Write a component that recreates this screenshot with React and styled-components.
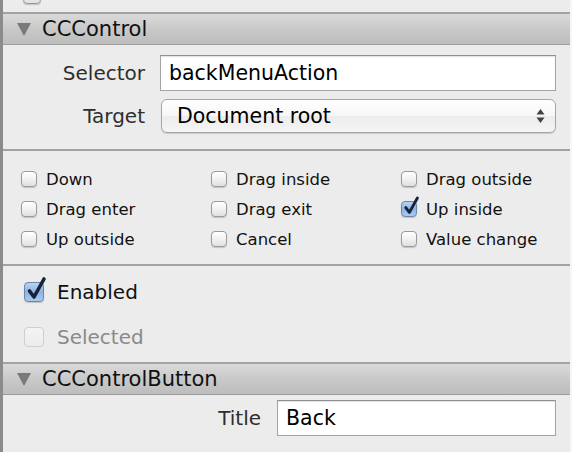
import React from 'react';
import styled, { createGlobalStyle } from 'styled-components';

const Global = createGlobalStyle`
  html, body {
    margin: 0;
    padding: 0;
    background: #ececec;
  }
  * { box-sizing: border-box; }
`;

const Panel = styled.div`
  width: 572px;
  height: 452px;
  overflow: hidden;
  background: #ececec;
  border-left: 3px solid #8b8b8b;
  border-right: 2px solid #f6f6f6;
  font-family: "DejaVu Sans", "Liberation Sans", sans-serif;
  color: #1a1a1a;
  display: flex;
  flex-direction: column;
`;

const TopStrip = styled.div`
  height: 12px;
  overflow: hidden;
  padding-left: 20px;
  display: flex;
  align-items: flex-end;
  padding-bottom: 8px;
`;

const Header = styled.div`
  height: 33px;
  flex-shrink: 0;
  border-top: 2px solid #a3a3a3;
  border-bottom: 1px solid #9c9c9c;
  background: linear-gradient(#dadada, #c9c9c9 50%, #bdbdbd);
  display: flex;
  align-items: center;
  gap: 11px;
  padding-left: 14px;
  font-size: 21px;
  color: #111;
`;

const Triangle = styled.span`
  width: 0;
  height: 0;
  border-left: 7.5px solid transparent;
  border-right: 7.5px solid transparent;
  border-top: 13px solid #7a7a7a;
  margin-top: 1px;
`;

const Section = styled.div`
  flex-shrink: 0;
  padding: ${p => p.$pad};
  border-bottom: ${p => (p.$line ? '2px solid #a2a2a2' : 'none')};
`;

const FieldGrid = styled.div`
  display: grid;
  grid-template-columns: ${p => p.$label}px 1fr;
  column-gap: ${p => p.$gap}px;
  row-gap: 8px;
  align-items: center;
  padding-right: 14px;
`;

const Label = styled.span`
  text-align: right;
  font-size: 20px;
  color: #2e2e2e;
`;

const TextField = styled.div`
  height: 36px;
  background: #fff;
  border: 1px solid #a4a4a4;
  border-top-color: #8f8f8f;
  box-shadow: inset 0 1px 1px rgba(0, 0, 0, 0.12);
  display: flex;
  align-items: center;
  padding-left: 8px;
  font-size: 20.5px;
  color: #000;
`;

const Select = styled.div`
  height: 34px;
  margin-left: 1px;
  border: 1px solid #a6a6a6;
  border-radius: 6px;
  background: linear-gradient(#ffffff, #f7f7f7 50%, #ececec 51%, #f5f5f5);
  box-shadow: 0 1px 1px rgba(0, 0, 0, 0.15);
  display: flex;
  align-items: center;
  justify-content: space-between;
  padding: 0 10px 0 15px;
  font-size: 20.5px;
  color: #000;
`;

const CheckGrid = styled.div`
  display: grid;
  grid-template-columns: repeat(3, 190px);
  grid-auto-rows: 30px;
  align-items: center;
  padding-left: 18px;
`;

const CheckItem = styled.label`
  display: flex;
  align-items: center;
  gap: ${p => p.$gap}px;
  font-size: ${p => p.$size}px;
  color: ${p => (p.$disabled ? '#8a8a8a' : '#111')};
  height: ${p => p.$height}px;
`;

const Box = styled.span`
  display: block;
  position: relative;
  flex-shrink: 0;
  width: ${p => p.$size}px;
  height: ${p => p.$size}px;
  border-radius: 4px;
  border: 1px solid ${p => (p.$checked ? '#6b86a8' : p.$disabled ? '#cfcfcf' : '#9a9a9a')};
  background: ${p =>
    p.$checked
      ? 'linear-gradient(#b9d3f1, #8fb4e2 50%, #a9c9f0 100%)'
      : p.$disabled
      ? 'linear-gradient(#f4f4f4, #ececec)'
      : 'linear-gradient(#ffffff, #f0f0f0 55%, #e0e0e0)'};
  box-shadow: ${p => (p.$disabled ? 'none' : '0 1px 1px rgba(0,0,0,0.18)')};
`;

const Mark = styled.svg`
  position: absolute;
  left: 1px;
  top: -6px;
  overflow: visible;
`;

const Arrows = styled.svg`
  display: block;
`;

const Check = ({ label, checked, disabled, size = 16, font = 16.5, gap = 9, height = 30 }) => (
  <CheckItem $gap={gap} $size={font} $disabled={disabled} $height={height}>
    <Box $size={size} $checked={checked} $disabled={disabled}>
      {checked && (
        <Mark width={size} height={size + 4} viewBox="0 0 20 24">
          <path d="M3.5 14 L8 20 L18 2" fill="none" stroke="#15233d" strokeWidth="3.6" strokeLinecap="round" strokeLinejoin="round" />
        </Mark>
      )}
    </Box>
    {label}
  </CheckItem>
);

const events = [
  ['Down', false], ['Drag inside', false], ['Drag outside', false],
  ['Drag enter', false], ['Drag exit', false], ['Up inside', true],
  ['Up outside', false], ['Cancel', false], ['Value change', false],
];

export default function App() {
  return (
    <>
      <Global />
      <Panel>
        <TopStrip>
          <Box $size={18} />
        </TopStrip>

        <Header>
          <Triangle />
          CCControl
        </Header>

        <Section $pad="10px 0 16px" $line>
          <FieldGrid $label={142} $gap={15}>
            <Label>Selector</Label>
            <TextField>backMenuAction</TextField>
            <Label>Target</Label>
            <Select>
              Document root
              <Arrows width="9" height="16" viewBox="0 0 9 16">
                <path d="M4.5 1 L8.5 6.5 L0.5 6.5 Z" fill="#444" />
                <path d="M4.5 15 L8.5 9.5 L0.5 9.5 Z" fill="#444" />
              </Arrows>
            </Select>
          </FieldGrid>
        </Section>

        <Section $pad="13px 0 10px" $line>
          <CheckGrid>
            {events.map(([name, on]) => (
              <Check key={name} label={name} checked={on} />
            ))}
          </CheckGrid>
        </Section>

        <Section $pad="6px 0 5px 21px">
          <Check label="Enabled" checked size={20} font={20} gap={13} height={40} />
          <div style={{ height: 5 }} />
          <Check label="Selected" disabled size={20} font={20} gap={13} height={40} />
        </Section>

        <Header>
          <Triangle />
          CCControlButton
        </Header>

        <Section $pad="5px 0 0">
          <FieldGrid $label={258} $gap={16}>
            <Label>Title</Label>
            <TextField>Back</TextField>
          </FieldGrid>
        </Section>
      </Panel>
    </>
  );
}
